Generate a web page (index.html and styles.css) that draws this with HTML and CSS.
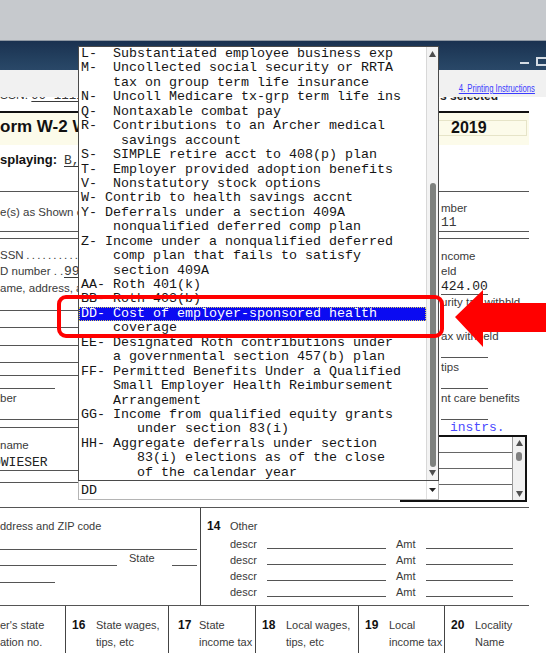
FILE: index.html
```html
<!DOCTYPE html>
<html lang="en">
<head>
<meta charset="utf-8">
<title>W-2 Wage and Tax Statement</title>
<link rel="stylesheet" href="styles.css">
</head>
<body>
<div class="screen">
  <div class="desk"></div>

  <div class="titlebar">
    <span class="win-min"></span>
    <span class="win-max"></span>
  </div>

  <div class="toolbar">
    <a class="print-link" href="#">4. Printing Instructions</a>
  </div>

  <div class="sheet">
    <div class="clip-row">
      <div class="clip-left">SSN: <span class="mono ul">99 1111 1111</span></div>
      <div class="clip-right"><span class="sel-count">s selected</span></div>
    </div>
    <div class="rule-thick"></div>

    <div class="title-band">
      <div class="form-title">orm W-2 Wage and Tax Statement</div>
      <div class="form-year">2019</div>
    </div>

    <div class="display-row">
      <span class="display-label">splaying:</span><span class="mono ul">B, </span>
    </div>
    <div class="rule"></div>

    <div class="names-row">
      <div class="names-left">e(s) as Shown on W-2</div>
      <div class="names-right">
        <div class="lbl">mber</div>
        <div class="mono">11</div>
      </div>
    </div>
    <div class="rule-double"></div>

    <div class="mid">
      <div class="stack-left">
        <div class="id-block">
          <div class="ln">SSN<span class="dots"> . . . . . . . . . . . . .</span></div>
          <div class="ln"><span class="lead">D number . . .</span><span class="mono ul">99 1111111</span></div>
          <div class="ln">ame, address, and ZIP code</div>
        </div>
        <div class="cell h17"></div>
        <div class="cell h18"></div>
        <div class="cell h17"></div>
        <div class="cell h13"></div>
        <div class="short-row"><span class="field w55"></span></div>
        <div class="cell num-block"><span class="ln ber">ber</span></div>
        <div class="cell h8"></div>
        <div class="cell name-block">
          <div class="ln">name</div>
          <div class="mono surname">OWIESER</div>
        </div>
      </div>
      <div class="mid-gap"></div>
      <div class="stack-right">
        <div class="fed-block">
          <div>ncome</div>
          <div>eld</div>
          <div><span class="mono amt">424.00</span></div>
          <div>urity tax withhld</div>
        </div>
        <div class="med-block">ax withheld</div>
        <div class="r-field h15"></div>
        <div class="r-field r-row">tips</div>
        <div class="r-field r-row">nt care benefits</div>
        <div class="instrs mono">instrs.</div>
        <div class="code-grid">
          <div class="code-rows">
            <div class="code-row"></div>
            <div class="code-row"></div>
            <div class="code-row"></div>
            <div class="code-row"></div>
          </div>
          <div class="mini-scroll">
            <svg class="arr" viewBox="0 0 7 6" width="7" height="6"><polygon points="0,6 3.5,0 7,6"/></svg>
            <div class="mini-thumb"></div>
            <svg class="arr arr-down" viewBox="0 0 7 6" width="7" height="6"><polygon points="0,0 3.5,6 7,0"/></svg>
          </div>
        </div>
      </div>
    </div>
    <div class="rule"></div>

    <div class="lower">
      <div class="lower-left">
        <div class="ln addr">ddress and ZIP code</div>
        <div class="lf-full"></div>
        <div class="state-line">
          <span class="field f117"></span>
          <span class="state-lbl">State</span>
          <span class="field f25"></span>
        </div>
        <div class="lf-short"></div>
      </div>
      <div class="lower-right">
        <div class="other-head"><b class="n">14</b><span>Other</span></div>
        <div class="descr-row"><span class="d-lbl">descr</span><span class="field f119"></span><span class="a-lbl">Amt</span><span class="field f87"></span></div>
        <div class="descr-row"><span class="d-lbl">descr</span><span class="field f119"></span><span class="a-lbl">Amt</span><span class="field f87"></span></div>
        <div class="descr-row"><span class="d-lbl">descr</span><span class="field f119"></span><span class="a-lbl">Amt</span><span class="field f87"></span></div>
        <div class="descr-row"><span class="d-lbl">descr</span><span class="field f119"></span><span class="a-lbl">Amt</span><span class="field f87"></span></div>
      </div>
    </div>

    <div class="state-boxes">
      <div class="sb first"><span class="t">er's state<br>ation no.</span></div>
      <div class="sb"><b class="n">16</b><span class="t">State wages,<br>tips, etc</span></div>
      <div class="sb sb17"><b class="n">17</b><span class="t">State<br>income tax</span></div>
      <div class="sb"><b class="n">18</b><span class="t">Local wages,<br>tips, etc</span></div>
      <div class="sb"><b class="n">19</b><span class="t">Local<br>income tax</span></div>
      <div class="sb last"><b class="n">20</b><span class="t">Locality<br>Name</span></div>
    </div>
  </div>

  <!-- open code list of the box 12 combo -->
  <div class="combo">
    <div class="combo-list">
      <div class="opts">
        <div class="opt">L-  Substantiated employee business exp</div>
        <div class="opt">M-  Uncollected social security or RRTA</div>
        <div class="opt">    tax on group term life insurance</div>
        <div class="opt">N-  Uncoll Medicare tx-grp term life ins</div>
        <div class="opt">Q-  Nontaxable combat pay</div>
        <div class="opt">R-  Contributions to an Archer medical</div>
        <div class="opt">     savings account</div>
        <div class="opt">S-  SIMPLE retire acct to 408(p) plan</div>
        <div class="opt">T-  Employer provided adoption benefits</div>
        <div class="opt">V-  Nonstatutory stock options</div>
        <div class="opt">W- Contrib to health savings accnt</div>
        <div class="opt">Y- Deferrals under a section 409A</div>
        <div class="opt">    nonqualified deferred comp plan</div>
        <div class="opt">Z- Income under a nonqualified deferred</div>
        <div class="opt">    comp plan that fails to satisfy</div>
        <div class="opt">    section 409A</div>
        <div class="opt">AA- Roth 401(k)</div>
        <div class="opt">BB- Roth 403(b)</div>
        <div class="opt selected">DD- Cost of employer-sponsored health</div>
        <div class="opt">    coverage</div>
        <div class="opt">EE- Designated Roth contributions under</div>
        <div class="opt">    a governmental section 457(b) plan</div>
        <div class="opt">FF- Permitted Benefits Under a Qualified</div>
        <div class="opt">    Small Employer Health Reimbursement</div>
        <div class="opt">    Arrangement</div>
        <div class="opt">GG- Income from qualified equity grants</div>
        <div class="opt">       under section 83(i)</div>
        <div class="opt">HH- Aggregate deferrals under section</div>
        <div class="opt">       83(i) elections as of the close</div>
        <div class="opt">       of the calendar year</div>
      </div>
      <div class="vscroll">
        <svg class="arr" viewBox="0 0 7 6" width="7" height="6"><polygon points="0,6 3.5,0 7,6"/></svg>
        <div class="track"><div class="thumb"></div></div>
        <svg class="arr" viewBox="0 0 7 6" width="7" height="6"><polygon points="0,0 3.5,6 7,0"/></svg>
      </div>
    </div>
    <div class="combo-input">
      <span class="combo-value">DD</span>
      <span class="combo-btn"><svg viewBox="0 0 7 4" width="7" height="4"><polygon points="0,0 3.5,4 7,0"/></svg></span>
    </div>
  </div>

  <!-- red callout around the selected code -->
  <div class="callout"></div>
  <svg class="callout-arrow" viewBox="0 0 93 61" width="93" height="61">
    <polygon points="2,29 30,2 30,15 93,15 93,44 30,44 30,59"/>
  </svg>
</div>
</body>
</html>
```

FILE: styles.css
```css
* {
  box-sizing: border-box;
  margin: 0;
  padding: 0;
}

html,
body {
  width: 546px;
  height: 653px;
  overflow: hidden;
  background: #fff;
}

body {
  font-family: "Liberation Sans", Arial, sans-serif;
  font-size: 11.5px;
  color: #3a3a3a;
}

.screen {
  position: relative;
  width: 546px;
  height: 653px;
  overflow: hidden;
  background: #fff;
}

.mono {
  font-family: "Liberation Mono", "Courier New", monospace;
  font-size: 13px;
}

.ul {
  text-decoration: underline;
  text-underline-offset: 2px;
}

/* ---------- window chrome ---------- */

.desk {
  height: 41px;
  background: #c6c9cd;
  border-bottom: 1px solid #8e97a2;
}

.titlebar {
  height: 29px;
  background: linear-gradient(#1a3150, #23405f 60%, #2a4868);
  display: flex;
  justify-content: flex-end;
  align-items: flex-start;
  gap: 7px;
  padding-top: 16px;
}

.win-min {
  width: 9px;
  height: 2px;
  margin-top: 5px;
  background: #d4dbe3;
}

.win-max {
  width: 10px;
  height: 9px;
  border: 2px solid #d4dbe3;
  border-right: 0;
}

.toolbar {
  height: 27px;
  background: #f1f1f1;
  display: flex;
  justify-content: flex-end;
  align-items: flex-end;
  padding: 0 11px 2px 0;
}

.print-link {
  display: inline-block;
  font-size: 10px;
  line-height: 12px;
  color: #3b3bff;
  text-decoration: underline;
  white-space: nowrap;
  transform: scaleX(0.77);
  transform-origin: right center;
}

/* ---------- form sheet ---------- */

.sheet {
  width: 529px;
}

.clip-row {
  height: 8px;
  overflow: hidden;
  display: grid;
  grid-template-columns: 438px 91px;
  align-items: end;
}

.clip-left,
.clip-right {
  line-height: 13px;
  margin-bottom: 2px;
  white-space: nowrap;
  overflow: hidden;
}

.clip-left {
  font-size: 12px;
}

.clip-left .mono {
  font-size: 12.5px;
}

.sel-count {
  display: inline-block;
  padding: 0 8px 0 2px;
  font-weight: bold;
  font-size: 12px;
  line-height: 12px;
  color: #222;
}

.rule-thick {
  margin-top: 6px;
  height: 2px;
  background: #111;
}

.rule {
  height: 1px;
  background: #555;
}

.rule-double {
  height: 8px;
  border-top: 1px solid #555;
  border-bottom: 1px solid #555;
}

.title-band {
  height: 32px;
  background: #fcfbea;
  display: grid;
  grid-template-columns: 438px 89px;
}

.form-title {
  padding-top: 4px;
  font-size: 17px;
  line-height: 20px;
  font-weight: bold;
  color: #111;
  white-space: nowrap;
  overflow: hidden;
}

.form-year {
  margin-top: 7px;
  height: 16px;
  border: 1px solid #e6e4c8;
  padding-left: 12px;
  font-size: 16px;
  line-height: 14px;
  font-weight: bold;
  color: #111;
}

.display-row {
  height: 46px;
  padding-top: 7px;
  line-height: 16px;
  white-space: nowrap;
}

.display-label {
  display: inline-block;
  width: 64px;
  font-size: 13px;
  font-weight: bold;
  color: #111;
}

.names-row {
  height: 39px;
  display: grid;
  grid-template-columns: 441px 88px;
}

.names-left {
  padding-top: 13px;
  line-height: 14px;
  white-space: nowrap;
  overflow: hidden;
}

.names-right {
  padding-top: 9px;
}

.names-right .lbl {
  line-height: 14px;
}

.names-right .mono {
  line-height: 15px;
}

/* ---------- middle block: two stacks of fields ---------- */

.mid {
  height: 268px;
  display: grid;
  grid-template-columns: 200px 241px 88px;
}

.stack-left {
  display: flex;
  flex-direction: column;
}

.ln {
  line-height: 16px;
  white-space: nowrap;
  overflow: hidden;
}

.cell {
  border-bottom: 1px solid #555;
}

.id-block {
  height: 72px;
  padding-top: 8px;
  border-bottom: 1px solid #555;
}

.dots {
  letter-spacing: -0.5px;
}

.lead {
  display: inline-block;
  width: 64px;
}

.h17 { height: 17px; }
.h18 { height: 18px; }
.h13 { height: 13px; }
.h8 { height: 8px; }
.h15 { height: 15px; }

.short-row {
  height: 13px;
}

.field {
  display: block;
  border-bottom: 1px solid #555;
}

.w55 {
  width: 55px;
  height: 13px;
}

.num-block {
  height: 31px;
  padding-top: 2px;
}

.ber {
  text-indent: -3px;
  line-height: 14px;
}

.name-block {
  height: 55px;
  padding-top: 10px;
}

.name-block .ln {
  line-height: 14px;
}

.surname {
  width: 78px;
  margin-top: 3px;
  line-height: 15px;
  text-indent: -7px;
  overflow: hidden;
  white-space: nowrap;
  border-bottom: 1px solid #555;
  color: #222;
}

.stack-right {
  display: flex;
  flex-direction: column;
  white-space: nowrap;
}

.fed-block {
  height: 70px;
  padding-top: 10px;
  line-height: 15px;
}

.amt {
  display: inline-block;
  width: 47px;
  border-bottom: 1px solid #555;
  line-height: 14px;
  color: #222;
}

.med-block {
  height: 34px;
  padding-top: 20px;
  line-height: 15px;
}

.r-field {
  width: 47px;
  border-bottom: 1px solid #555;
}

.r-row {
  height: 31px;
  padding-top: 2px;
  line-height: 14px;
  overflow: visible;
}

.instrs {
  height: 15px;
  line-height: 15px;
  padding-left: 9px;
  color: #4a4aff;
}

.code-grid {
  margin-left: -41px;
  width: 127px;
  height: 67px;
  border: 2px solid #111;
  display: flex;
  background: #fff;
}

.code-rows {
  flex: 1;
  display: flex;
  flex-direction: column;
}

.code-row {
  flex: 1;
  border-bottom: 1px solid #666;
}

.code-row:last-child {
  border-bottom: 0;
}

.mini-scroll {
  width: 13px;
  background: #f1f1f1;
  border-left: 1px solid #999;
  display: flex;
  flex-direction: column;
  align-items: center;
  padding: 3px 0;
}

.mini-scroll .arr {
  fill: #505050;
}

.mini-thumb {
  width: 6px;
  height: 9px;
  margin-top: 6px;
  border-radius: 3px;
  background: #808080;
}

.mini-scroll .arr-down {
  margin-top: auto;
}

/* ---------- lower part: address and box 14 ---------- */

.lower {
  height: 98px;
  display: grid;
  grid-template-columns: 201px 328px;
  border-bottom: 1px solid #555;
}

.lower-left {
  border-right: 1px solid #444;
}

.addr {
  padding-top: 11px;
  line-height: 14px;
  height: 25px;
  font-size: 11px;
}

.lf-full {
  width: 197px;
  height: 17px;
  border-bottom: 1px solid #555;
}

.state-line {
  height: 16px;
  display: flex;
}

.f117 {
  width: 117px;
  height: 16px;
}

.state-lbl {
  width: 55px;
  padding-left: 12px;
  line-height: 16px;
  font-size: 11px;
}

.f25 {
  width: 25px;
  height: 16px;
}

.lf-short {
  width: 55px;
  height: 17px;
  border-bottom: 1px solid #555;
}

.lower-right {
  font-size: 11px;
}

.other-head {
  height: 28px;
  padding: 11px 0 0 6px;
  line-height: 14px;
  display: flex;
}

.n {
  display: inline-block;
  width: 23px;
  font-size: 12px;
  color: #111;
}

.descr-row {
  height: 16px;
  display: flex;
  align-items: flex-start;
  line-height: 16px;
}

.d-lbl {
  width: 66px;
  padding-left: 29px;
}

.f119 {
  width: 119px;
  height: 13px;
}

.a-lbl {
  width: 40px;
  padding-left: 10px;
}

.f87 {
  width: 87px;
  height: 13px;
}

/* ---------- boxes 15-20 ---------- */

.state-boxes {
  height: 48px;
  display: grid;
  grid-template-columns: 66px 103px 87px 103px 86px 84px;
  font-size: 11px;
}

.sb {
  display: flex;
  padding: 11px 0 0 6px;
  border-right: 1px solid #444;
  line-height: 17px;
  white-space: nowrap;
}

.sb .n {
  width: 24px;
}

.sb.first {
  padding-left: 0;
}

.sb.sb17 {
  padding-left: 9px;
}

.sb.sb17 .n {
  width: 21px;
}

.sb.last {
  border-right: 0;
}

/* ---------- open combo list ---------- */

.combo {
  position: absolute;
  left: 78px;
  top: 46px;
  width: 361px;
}

.combo-list {
  height: 435px;
  background: #fff;
  border: 1px solid #4a4a4a;
  display: flex;
}

.opts {
  flex: 1;
}

.opt {
  height: 14.45px;
  padding-left: 2px;
  font-family: "Liberation Mono", "Courier New", monospace;
  font-size: 13.33px;
  line-height: 14.45px;
  white-space: pre;
  color: #151515;
}

.opt.selected {
  background: #0b0bf2;
  color: #fff;
  outline: 1px dotted #d8d060;
  outline-offset: -1px;
}

.vscroll {
  width: 12px;
  background: #f3f3f3;
  border-left: 1px solid #d8d8d8;
  display: flex;
  flex-direction: column;
  align-items: center;
  padding: 4px 0 4px;
}

.vscroll .arr {
  fill: #4e4e4e;
  flex: none;
}

.track {
  flex: 1;
  width: 100%;
  display: flex;
  justify-content: center;
}

.thumb {
  width: 6px;
  height: 284px;
  margin-top: 126px;
  border-radius: 3px;
  background: #7e817e;
}

.combo-input {
  height: 19px;
  background: #fff;
  border: 1px solid #b4b4b4;
  border-top: 0;
  display: flex;
  align-items: center;
}

.combo-value {
  flex: 1;
  padding-left: 2px;
  font-family: "Liberation Mono", "Courier New", monospace;
  font-size: 13.33px;
  color: #151515;
}

.combo-btn {
  width: 12px;
  height: 18px;
  border-left: 1px solid #e0e0e0;
  display: flex;
  align-items: center;
  justify-content: center;
  fill: #222;
}

/* ---------- red callout ---------- */

.callout {
  position: absolute;
  left: 57px;
  top: 295px;
  width: 387px;
  height: 43px;
  border: 4px solid #f00;
  border-radius: 9px;
}

.callout-arrow {
  position: absolute;
  left: 453px;
  top: 288px;
  fill: #f00;
}
```
